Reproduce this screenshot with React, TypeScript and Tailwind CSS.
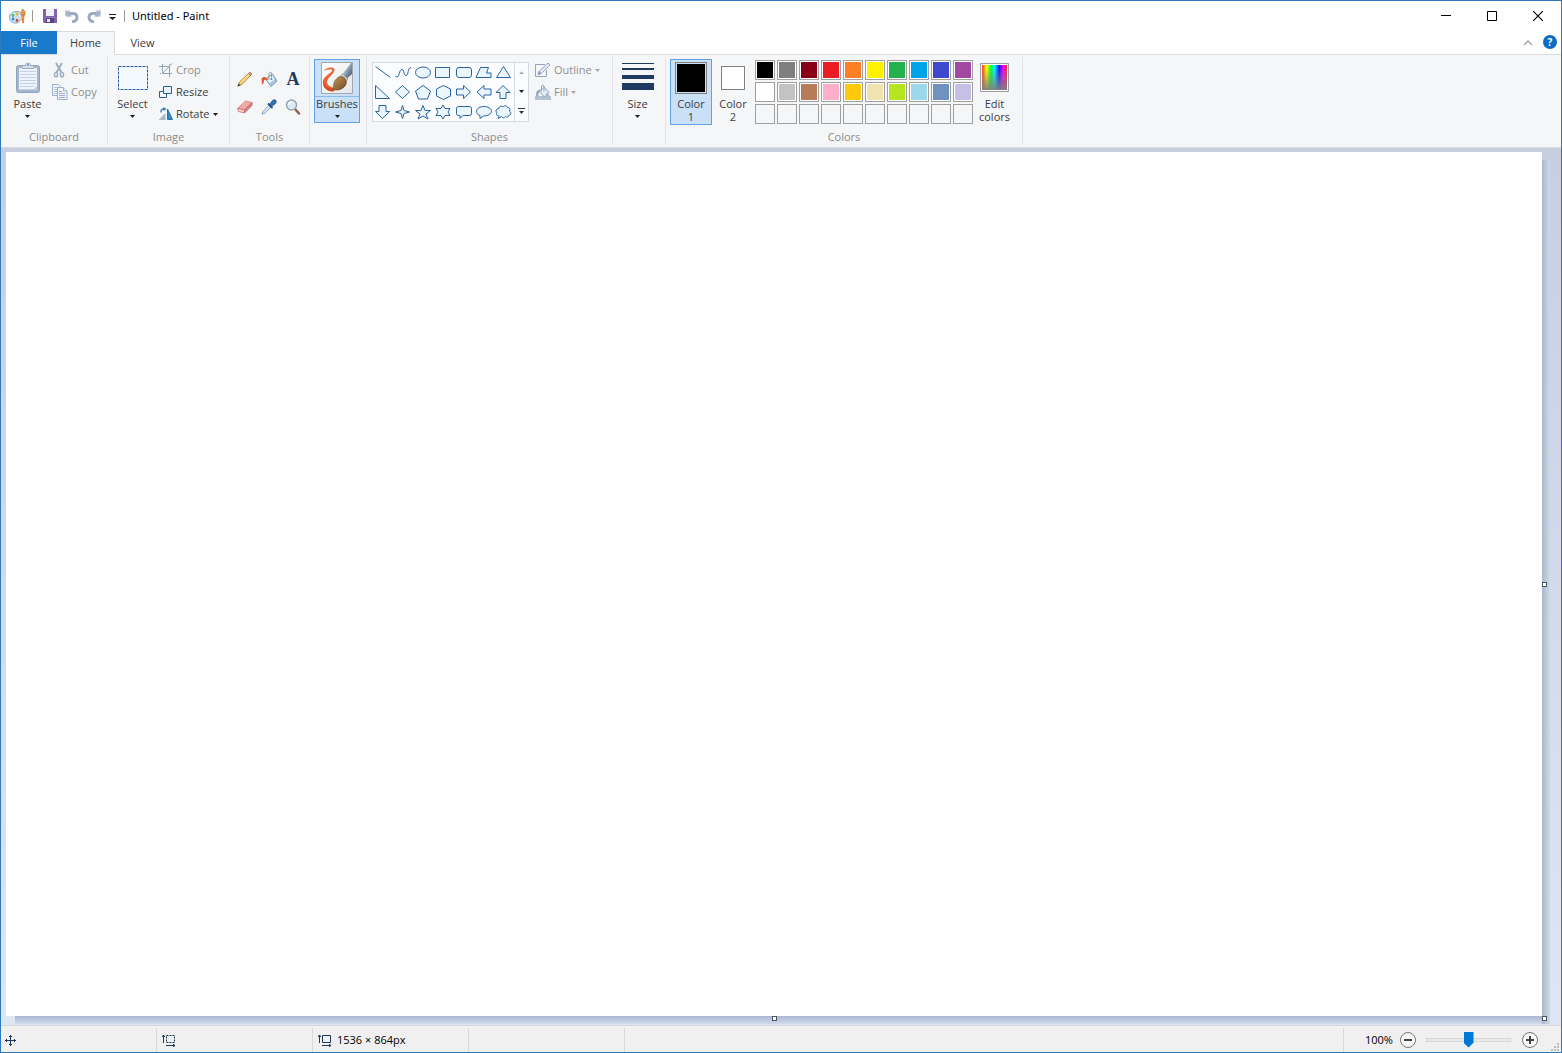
import { useState } from "react";
import type { ReactNode } from "react";
import clsx from "clsx";

const palette = [
  { name: "Black", className: "bg-[#000000]" },
  { name: "Gray-50%", className: "bg-[#7f7f7f]" },
  { name: "Dark red", className: "bg-[#880015]" },
  { name: "Red", className: "bg-[#ed1c24]" },
  { name: "Orange", className: "bg-[#ff7f27]" },
  { name: "Yellow", className: "bg-[#fff200]" },
  { name: "Green", className: "bg-[#22b14c]" },
  { name: "Turquoise", className: "bg-[#00a2e8]" },
  { name: "Indigo", className: "bg-[#3f48cc]" },
  { name: "Purple", className: "bg-[#a349a4]" },
  { name: "White", className: "bg-[#ffffff]" },
  { name: "Gray-25%", className: "bg-[#c3c3c3]" },
  { name: "Brown", className: "bg-[#b97a57]" },
  { name: "Rose", className: "bg-[#ffaec9]" },
  { name: "Gold", className: "bg-[#ffc90e]" },
  { name: "Light yellow", className: "bg-[#efe4b0]" },
  { name: "Lime", className: "bg-[#b5e61d]" },
  { name: "Light turquoise", className: "bg-[#99d9ea]" },
  { name: "Blue-gray", className: "bg-[#7092be]" },
  { name: "Lavender", className: "bg-[#c8bfe7]" },
];

// every outline is drawn on a 20x20 cell
const shapes = [
  { name: "Line", d: "M2.5 3.5 17.5 14.5" },
  { name: "Curve", d: "M2.5 13.5C7 16 6 5.5 9 6.5S10 12.5 13 12.5 14 5 18 4.5" },
  { name: "Oval", d: "M2.5 9.5a7.5 5.5 0 1 0 15 0a7.5 5.5 0 1 0-15 0Z" },
  { name: "Rectangle", d: "M2.5 4.5h14v10h-14Z" },
  { name: "Rounded rectangle", d: "M5 4.5h10a2.5 2.5 0 0 1 2.5 2.5v5a2.5 2.5 0 0 1-2.5 2.5H5a2.5 2.5 0 0 1-2.5-2.5V7A2.5 2.5 0 0 1 5 4.5Z" },
  { name: "Polygon", d: "M6.5 4.5h8l-2 5.5h4.5v4.5h-15Z" },
  { name: "Triangle", d: "M9.5 3.5 16.5 14.5h-14Z" },
  { name: "Right triangle", d: "M2.5 2.5v13h14Z" },
  { name: "Diamond", d: "M9.5 2.5 16.5 9l-7 6.5L2.5 9Z" },
  { name: "Pentagon", d: "M10 2.5 17.5 8l-3 8h-9l-3-8Z" },
  { name: "Hexagon", d: "M10.500 2.5l7 3.5v7l-7 3.5-7-3.5V6Z" },
  { name: "Right arrow", d: "M2.5 6h7V2.5L16.500 9l-7 6.5V12h-7Z" },
  { name: "Left arrow", d: "M17 6h-7V2.5L3 9l7 6.5V12h7Z" },
  { name: "Up arrow", d: "M6 15.5v-6H2l7-7 7 7H12v6Z" },
  { name: "Down arrow", d: "M6 2.5v6H2.5l7 7 7-7H13v-6Z" },
  { name: "Four-point star", d: "M9.5 2.5l1.5 5 5.5 1.5-5.5 1.5-1.5 5-1.5-5L2.5 9 8 7.5Z" },
  { name: "Five-point star", d: "M10 2.5l2 5h5.5l-4.500 3.5 2 5-5-3-5 3 2-5-4.500-3.5H8Z" },
  { name: "Six-point star", d: "M10 2l2 3.5h5L15 9l2 3.5h-5L10 16l-2-3.5H3L5 9 3 5.5h5Z" },
  { name: "Rounded callout", d: "M4.5 3.5h11a2 2 0 0 1 2 2v5a2 2 0 0 1-2 2H9l-3 3v-3H4.5a2 2 0 0 1-2-2v-5a2 2 0 0 1 2-2Z" },
  { name: "Oval callout", d: "M6 12.5C3.5 11.8 2.5 10.2 2.5 8.2 2.5 5.5 6 3.5 10 3.5s7.5 2 7.5 4.7-3.5 4.8-8 4.8l-3.5 2.5Z" },
  { name: "Cloud callout", d: "M5 5.5C5 3 7.500 2.5 9 4 10.500 2 13 2.500 13.500 4.500c2.500 0 3 2 2 3.500 2 1 1.500 4-.5 4 0 2-2.500 2.500-3.500 1.500C10.500 15.500 8 15 7.500 13.500l-3 2 .5-2.500C2.500 13 2 11 3 9.500 1 8.500 2 5.500 5 5.500Z" },
];

const line = { fill: "none", stroke: "#2a649f", strokeWidth: 1 };

function Caret({ faded = false }: { faded?: boolean }) {
  return (
    <svg width="5" height="3" viewBox="0 0 5 3" className={clsx("shrink-0", faded ? "text-[#a8a8a8]" : "text-[#1e1e1e]")}>
      <path d="M0 0h5L2.5 3Z" fill="currentColor" />
    </svg>
  );
}

function Group({ label, className, children }: { label?: string; className: string; children: ReactNode }) {
  return (
    <section aria-label={label} className={clsx("flex shrink-0 flex-col border-r border-[#e0e3e7] pt-0.5", className)}>
      <div className="flex h-[66px] shrink-0">{children}</div>
      {label ? <p className="mt-1 shrink-0 text-center leading-4 text-[#8c8c8c]">{label}</p> : null}
    </section>
  );
}

function BigButton({ icon, label, caret = true, className }: { icon: ReactNode; label: string; caret?: boolean; className: string }) {
  return (
    <button type="button" className={clsx("flex flex-col items-center leading-[13px]", className)}>
      <span className="flex h-[38px] items-center justify-center">{icon}</span>
      <span>{label}</span>
      {caret ? <span className="flex h-3 items-center"><Caret /></span> : null}
    </button>
  );
}

function SmallButton({ icon, label, disabled = false, caret = false }: { icon: ReactNode; label: string; disabled?: boolean; caret?: boolean }) {
  return (
    <button type="button" disabled={disabled} className={clsx("flex h-[22px] items-center gap-[3px]", disabled && "text-[#8f8f8f]")}>
      {icon}
      <span>{label}</span>
      {caret ? <Caret faded={disabled} /> : null}
    </button>
  );
}

function PaintLogo() {
  return (
    <svg width="17" height="17" viewBox="0 0 17 17">
      <path d="M.5 9.5C.5 6 3.5 3.500 7.5 3.5S14 6 14 9s-2 2.5-3 3 0 3-4 3-6.5-2-6.5-5.5Z" fill="#cfe6f2" stroke="#7ba3bd" />
      <circle cx="4" cy="7.5" r="1.4" fill="#5bb54d" />
      <circle cx="8" cy="6" r="1.4" fill="#f0b429" />
      <circle cx="4" cy="11" r="1.4" fill="#3c7fd0" />
      <circle cx="8" cy="12.5" r="1.4" fill="#d34a3c" />
      <circle cx="8.5" cy="9.3" r="1.3" fill="#fff" stroke="#7ba3bd" strokeWidth=".5" />
      <path d="M12.5 7h3l-.5 8h-2Z" fill="#e88a3a" />
      <path d="M12 7c0-2 .5-4 1.5-6 2 1 3 3 2.5 6Z" fill="#e49b4c" stroke="#b46a2a" strokeWidth=".6" />
    </svg>
  );
}

function SaveIcon() {
  return (
    <svg width="14" height="14" viewBox="0 0 14 14">
      <path d="M0 0h14v14H1l-1-1Z" fill="#7f62aa" />
      <path d="M3 0h8v7H3Z" fill="#f1eef7" />
      <path d="M1.5 8h11v1h-11Z" fill="#9479bb" />
      <path d="M3 9h8v5H3Z" fill="#57457d" />
      <path d="M4 10h3v3H4Z" fill="#e8e2f2" />
    </svg>
  );
}

function UndoIcon({ flip = false }: { flip?: boolean }) {
  return (
    <svg width="14" height="14" viewBox="0 0 14 14" className={clsx(flip && "-scale-x-100")}>
      <path d="M4 4.5h3.5c3 0 4.5 1.7 4.5 3.8 0 2.5-2 4.2-5 4.7" fill="none" stroke="#9aaac1" strokeWidth="3" />
      <path d="M.5 0v7.5H7Z" fill="#a8b6ca" />
      <path d="M0 4.5 4.5.5v8Z" fill="#a8b6ca" />
    </svg>
  );
}

function PasteIcon() {
  return (
    <svg width="26" height="32" viewBox="0 0 26 32">
      <rect x="1.5" y="3.5" width="23" height="27" rx="2" fill="#a4b5cd" stroke="#8fa2be" />
      <path d="M4 6h18v22H4Z" fill="#eef3fb" />
      <path d="M4 28v-1h15l3-3v4Z" fill="#c3cfe1" />
      <path d="M5 9.5h16M5 12.5h16M5 15.5h16M5 18.5h16M5 21.5h16M5 24.5h14" stroke="#c2d1e8" />
      <path d="M7 3.5h3.5a2.5 2.5 0 0 1 5 0H19V6.5H7Z" fill="#d5deea" stroke="#9aabc3" />
      <circle cx="13" cy="3" r="1" fill="#8396b2" />
    </svg>
  );
}

function CutIcon() {
  return (
    <svg width="16" height="16" viewBox="0 0 16 16" fill="none" stroke="#9dabc1">
      <path d="M4 1 9.5 10.5M10 1 4.5 10.5" strokeWidth="1.9" />
      <ellipse cx="4" cy="12.7" rx="1.6" ry="2.1" strokeWidth="1.4" />
      <ellipse cx="10" cy="12.7" rx="1.6" ry="2.1" strokeWidth="1.4" />
    </svg>
  );
}

function CopyIcon() {
  return (
    <svg width="16" height="16" viewBox="0 0 16 16" fill="#f0f4fa" stroke="#9eafc9">
      <path d="M.5.5h6l2 2v9h-8Z" />
      <path d="M2 3.5h4M2 5.5h4M2 7.5h4M2 9.5h3" stroke="#b8c6da" />
      <path d="M5.5 3.5h6l3.5 3.5v8.5H5.5Z" />
      <path d="M11.5 3.5v3.5h3.500M7 7.5h3M7 9.5h6M7 11.5h6M7 13.5h6" stroke="#9dafca" />
    </svg>
  );
}

function CropIcon() {
  return (
    <svg width="14" height="14" viewBox="0 0 14 14" fill="none" stroke="#95a3b7">
      <path d="M3.5 1v9.5H13M0 3.5h10.5V14" />
      <path d="M4 10 13 .5" />
      <path d="M1 10.5h2M10.5 1v2" strokeDasharray="1 1" />
    </svg>
  );
}

function ResizeIcon() {
  return (
    <svg width="14" height="14" viewBox="0 0 14 14" fill="none" stroke="#1f5f9f">
      <path d="M.5 6.5h7v6h-7Z" fill="#fff" />
      <path d="M4.5 1.5h8v7h-8Z" fill="#e9f3fc" />
    </svg>
  );
}

function RotateIcon() {
  return (
    <svg width="14" height="14" viewBox="0 0 14 14">
      <path d="M6.5 6v7H-.5Z" fill="#a9b8c6" />
      <path d="M8.5 2v10.5H13.5Z" fill="#2c8ac4" stroke="#2475ad" />
      <path d="M2 5.5Q1.5 2 5 2" fill="none" stroke="#2f79c0" strokeWidth="1.3" />
      <path d="M4.5 0l3 2-3 2Z" fill="#2f79c0" />
    </svg>
  );
}

function PencilIcon() {
  return (
    <svg width="16" height="16" viewBox="0 0 16 16">
      <path d="M1 15l1.5-4L11.5 2.5 13.5 4.5 5 13.5Z" fill="#f4cf65" stroke="#a57b35" strokeWidth=".8" />
      <path d="M3.5 11.5 12 3.5" stroke="#fff0b5" strokeWidth=".8" />
      <path d="M11.5 2.5l1.5-1.5 2 2-1.5 1.5Z" fill="#e09a87" stroke="#97594b" strokeWidth=".6" />
      <path d="M.5 15.5l1-3 2 2Z" fill="#403930" />
    </svg>
  );
}

function BucketIcon() {
  return (
    <svg width="17" height="17" viewBox="0 0 17 17">
      <path d="M4.5 8 11.5 3 16 10 10 15.5Z" fill="#a5c9e5" stroke="#7890a5" strokeWidth=".9" />
      <path d="M5.5 8 11 4l2.5 4.5-5 3.5Z" fill="#eef6fb" />
      <path d="M7 8C3.5 5 1 5.5.5 8.5L1 13.5Q2.5 13.5 3 9.5 4 8 7 9Z" fill="#dc5832" />
      <path d="M8 9V2.5Q9 0 10.5 2v4.5" fill="none" stroke="#8395a4" strokeWidth=".9" />
      <circle cx="10.5" cy="8" r="1" fill="#647f96" />
    </svg>
  );
}

function EraserIcon() {
  return (
    <svg width="16" height="14" viewBox="0 0 16 14">
      <path d="M.5 8.5 8.5 1l6.500 1.5L7.5 10Z" fill="#f3a9a6" stroke="#c9817e" strokeWidth=".8" />
      <path d="M.5 8.5l7 1.5V13L1.5 11.5Z" fill="#f8cfcb" stroke="#c9716e" strokeWidth=".8" />
      <path d="M7.5 10 15 2.5v3L7.5 13Z" fill="#df7f7c" stroke="#b96663" strokeWidth=".8" />
    </svg>
  );
}

function PickerIcon() {
  return (
    <svg width="16" height="16" viewBox="0 0 16 16">
      <path d="M1 15l1-2.5 6-6 1.8 1.8-6 6Z" fill="#d6e9f5" stroke="#7c98ae" strokeWidth=".9" />
      <path d="M7 4.5l4.5 4.5" stroke="#244b7d" strokeWidth="1.8" />
      <path d="M8.5 5.5l3-4q2-1.5 3.2-.3t-.2 3.3l-4 3Z" fill="#2f74bd" stroke="#1e457c" strokeWidth=".8" />
    </svg>
  );
}

function MagnifierIcon() {
  return (
    <svg width="16" height="16" viewBox="0 0 16 16">
      <path d="M10 10 14 14.5" stroke="#8a6246" strokeWidth="2.5" strokeLinecap="round" />
      <circle cx="6.5" cy="6" r="5" fill="#dcebf8" stroke="#98a3ae" strokeWidth="1.5" />
      <path d="M3.5 6Q4 3 7 3" fill="none" stroke="#fff" strokeWidth="1.3" />
    </svg>
  );
}

function BrushIcon() {
  return (
    <svg width="32" height="32" viewBox="0 0 32 32">
      <defs>
        <linearGradient id="brush-paper" x2="1" y2="1">
          <stop stopColor="#fff" />
          <stop offset="1" stopColor="#e4e7ea" />
        </linearGradient>
        <linearGradient id="brush-handle" x2="1" y2="1">
          <stop offset=".2" stopColor="#e6edf3" />
          <stop offset=".55" stopColor="#8294a7" />
          <stop offset="1" stopColor="#33465d" />
        </linearGradient>
        <linearGradient id="brush-hair" x2="1" y2="1">
          <stop stopColor="#c89a5c" />
          <stop offset="1" stopColor="#6f4622" />
        </linearGradient>
      </defs>
      <path d="M.5.5h31v31H.5Z" fill="url(#brush-paper)" stroke="#a0a9b2" />
      <path d="M2.5 9C5 6 11 4 13.5 7 14.5 11 7 14.5 6 19.5 6 24 11 26 16 26L12 29.5C5 29.5 1 24 2 18.500 3.500 13.500 11 11 11.500 8 10 6.500 6 7.500 2.500 9Z" fill="#ed6233" />
      <path d="M2 19c1 5 5 8 12 7.5L12 29.5C6 29.5 1.5 25 2 19Z" fill="#d64820" />
      <path d="M21 12.5 30 1h1v11l-6 5.5Z" fill="url(#brush-handle)" />
      <path d="M18.5 15l3-3.5 5.5 5.5-3 3.5Z" fill="#cbd2d8" stroke="#7b858d" strokeWidth=".6" />
      <path d="M11.5 27.5c2-1.5 0-5.5 3-9.5s7-4.5 9.5-1.5 1.500 7-2 9.5-7.5 2.500-10.5 1.5Z" fill="url(#brush-hair)" stroke="#6b4726" strokeWidth=".6" />
    </svg>
  );
}

function OutlineIcon() {
  return (
    <svg width="16" height="16" viewBox="0 0 16 16" fill="none" stroke="#95a4b9">
      <path d="M10 2.5H.5v12h11V8" />
      <path d="M3 12.5l1.5-3.5 8.5-8 2 2-8.5 8Z" fill="#e6ebf3" />
      <path d="M3 12.5l1-3 2 2Z" fill="#8494ab" />
    </svg>
  );
}

function FillIcon() {
  return (
    <svg width="16" height="16" viewBox="0 0 16 16">
      <path d="M0 12h16v4H0Z" fill="#b4c1d5" />
      <path d="M4.5 7 9 3l5 5.5-4.5 4.5Z" fill="#e5ecf5" stroke="#91a3bd" />
      <path d="M6.5 7V2q1.200-2 2.5 0V7.5" fill="none" stroke="#91a3bd" />
      <path d="M5 5.5C1.5 6 1 8 1 12.5H3.5Q3 9 5 8Z" fill="#98abc7" />
      <path d="M12 8l3 4.5h-5Z" fill="#a5b6ce" />
    </svg>
  );
}

function SpectrumIcon() {
  return (
    <svg width="29" height="29" viewBox="0 0 29 29">
      <defs>
        <linearGradient id="spectrum-hue">
          <stop stopColor="#f33" />
          <stop offset=".18" stopColor="#ff0" />
          <stop offset=".36" stopColor="#0f3" />
          <stop offset=".5" stopColor="#0ff" />
          <stop offset=".68" stopColor="#11f" />
          <stop offset=".85" stopColor="#f0f" />
          <stop offset="1" stopColor="#f22" />
        </linearGradient>
        <linearGradient id="spectrum-gray" x2="0" y2="1">
          <stop offset=".1" stopColor="#808080" stopOpacity="0" />
          <stop offset="1" stopColor="#808080" stopOpacity=".95" />
        </linearGradient>
      </defs>
      <path d="M.5.5h28v28H.5Z" fill="#fff" stroke="#9c9c9c" />
      <path d="M2 2h25v25H2Z" fill="url(#spectrum-hue)" />
      <path d="M2 2h25v25H2Z" fill="url(#spectrum-gray)" />
    </svg>
  );
}

function TitleBar() {
  return (
    <header className="flex h-[30px] shrink-0 items-center bg-white pl-2">
      <PaintLogo />
      <span className="mx-[6px] h-3 w-px bg-[#9a9a9a]" />
      <div className="flex items-center gap-2 pl-1">
        <button type="button" aria-label="Save"><SaveIcon /></button>
        <button type="button" aria-label="Undo"><UndoIcon /></button>
        <button type="button" aria-label="Redo"><UndoIcon flip /></button>
        <button type="button" aria-label="Customize Quick Access Toolbar">
          <svg width="7" height="7" viewBox="0 0 7 7"><path d="M0 1.5h7" stroke="#222" /><path d="M0 4h7L3.5 7Z" fill="#222" /></svg>
        </button>
      </div>
      <span className="mr-[7px] ml-2 h-3 w-px bg-[#9a9a9a]" />
      <h1 className="font-['Noto_Sans',sans-serif] text-black">Untitled - Paint</h1>
      <div className="ml-auto flex h-full">
        <button type="button" aria-label="Minimize" className="flex w-[46px] items-center justify-center">
          <svg width="10" height="10" viewBox="0 0 10 10"><path d="M0 4.5h10" stroke="#000" /></svg>
        </button>
        <button type="button" aria-label="Maximize" className="flex w-[46px] items-center justify-center">
          <svg width="10" height="10" viewBox="0 0 10 10"><path d="M.5.5h9v9h-9Z" fill="none" stroke="#000" /></svg>
        </button>
        <button type="button" aria-label="Close" className="flex w-[46px] items-center justify-center">
          <svg width="10" height="10" viewBox="0 0 10 10"><path d="M0 0l10 10M10 0 0 10" stroke="#000" strokeWidth="1.2" /></svg>
        </button>
      </div>
    </header>
  );
}

function Tabs() {
  return (
    <nav className="flex h-6 shrink-0 bg-white">
      <button type="button" className="w-14 border-b border-[#dadbdc] bg-[#1979ca] pt-px text-white">File</button>
      <button type="button" className="w-[58px] border-t border-r border-[#dadbdc] bg-[#f5f6f7]">Home</button>
      <div className="flex flex-1 items-center border-b border-[#dadbdc]">
        <button type="button" className="w-[55px] pt-px">View</button>
        <button type="button" aria-label="Minimize the Ribbon" className="ml-auto">
          <svg width="10" height="6" viewBox="0 0 10 6"><path d="M1 5l4-4 4 4" fill="none" stroke="#a0a0a0" strokeWidth="1.3" /></svg>
        </button>
        <button type="button" aria-label="Help" className="mr-1 mb-px ml-[10px] size-[14px] rounded-full bg-[#0b6cc4] text-[10px] leading-[14px] font-bold text-white">?</button>
      </div>
    </nav>
  );
}

function Swatch({ label, number, selected, onClick }: { label: string; number: number; selected: boolean; onClick: () => void }) {
  return (
    <button
      type="button"
      aria-pressed={selected}
      onClick={onClick}
      className={clsx("flex h-[66px] w-[42px] flex-col items-center border leading-[13px]", selected ? "border-[#62a2e4] bg-[#c9e0f7]" : "border-transparent")}
    >
      <span className="flex h-[37px] items-center pb-px">
        {number === 1 ? (
          <span className="size-8 border border-[#808080] bg-black ring-1 ring-[#c9e0f7] ring-inset" />
        ) : (
          <span className="size-6 border border-[#808080] bg-white" />
        )}
      </span>
      <span>{label}</span>
      <span>{number}</span>
    </button>
  );
}

function Ribbon() {
  const [slot, setSlot] = useState(1);

  return (
    <div className="flex h-[92px] shrink-0 bg-[#f5f6f7] py-0.5">
      <Group label="Clipboard" className="w-[107px]">
        <BigButton icon={<PasteIcon />} label="Paste" className="ml-1 w-[45px]" />
        <div className="ml-0.5">
          <SmallButton icon={<CutIcon />} label="Cut" disabled />
          <SmallButton icon={<CopyIcon />} label="Copy" disabled />
        </div>
      </Group>

      <Group label="Image" className="w-[122px]">
        <BigButton
          icon={<svg width="30" height="24" viewBox="0 0 30 24"><path d="M.5.5h29v23H.5Z" fill="#f4f9fd" stroke="#2461a3" strokeDasharray="3 1" /></svg>}
          label="Select"
          className="ml-0.5 w-[45px]"
        />
        <div className="ml-1">
          <SmallButton icon={<CropIcon />} label="Crop" disabled />
          <SmallButton icon={<ResizeIcon />} label="Resize" />
          <SmallButton icon={<RotateIcon />} label="Rotate" caret />
        </div>
      </Group>

      <Group label="Tools" className="w-20">
        <div className="ml-[3px] grid grid-cols-[24px_24px_24px] content-start pt-[6px]">
          <button type="button" aria-label="Pencil" className="flex h-7 items-center justify-center"><PencilIcon /></button>
          <button type="button" aria-label="Fill with color" className="flex h-7 items-center justify-center"><BucketIcon /></button>
          <button type="button" aria-label="Text" className="h-7 font-['Liberation_Serif',serif] text-lg leading-7 font-bold text-[#1f3b5c]">A</button>
          <button type="button" aria-label="Eraser" className="flex h-7 items-center justify-center"><EraserIcon /></button>
          <button type="button" aria-label="Color picker" className="flex h-7 items-center justify-center"><PickerIcon /></button>
          <button type="button" aria-label="Magnifier" className="flex h-7 items-center justify-center"><MagnifierIcon /></button>
        </div>
      </Group>

      <Group className="w-[57px]">
        <button type="button" className="ml-1 flex h-16 w-[46px] flex-col items-center border border-[#62a2e4] bg-[#c9e0f7] leading-[13px]">
          <span className="flex h-[37px] w-full items-center justify-center border-b border-[#8dbbe9]"><BrushIcon /></span>
          <span>Brushes</span>
          <span className="flex h-3 items-center"><Caret /></span>
        </button>
      </Group>

      <Group label="Shapes" className="w-[246px]">
        <div className="mt-[3px] ml-[5px] flex h-[60px] w-[157px] border border-[#d5dae0] bg-[#fbfcfd]">
          <div className="grid w-[141px] grid-cols-7">
            {shapes.map((shape) => (
              <button key={shape.name} type="button" aria-label={shape.name}>
                <svg width="20" height="20" viewBox="0 0 20 20">
                  <path d={shape.d} {...line} fill={shape.d.endsWith("Z") ? "#ebf5fc" : "none"} />
                </svg>
              </button>
            ))}
          </div>
          <div className="flex flex-1 flex-col border-l border-[#d5dae0]">
            <button type="button" aria-label="Scroll up" className="flex flex-1 rotate-180 items-center justify-center"><Caret faded /></button>
            <button type="button" aria-label="Scroll down" className="flex flex-1 items-center justify-center"><Caret /></button>
            <button type="button" aria-label="More shapes" className="flex flex-1 items-center justify-center">
              <svg width="7" height="6" viewBox="0 0 7 6"><path d="M0 .5h7" stroke="#333" /><path d="M1 3h5L3.5 6Z" fill="#333" /></svg>
            </button>
          </div>
        </div>
        <div className="ml-[6px]">
          <SmallButton icon={<OutlineIcon />} label="Outline" disabled caret />
          <SmallButton icon={<FillIcon />} label="Fill" disabled caret />
        </div>
      </Group>

      <Group className="w-[53px]">
        <BigButton
          icon={<svg width="32" height="30" viewBox="0 0 32 30"><path d="M0 0h32v1H0ZM0 5h32v2H0ZM0 12h32v4H0ZM0 20h32v7H0Z" fill="#1f3a60" /></svg>}
          label="Size"
          className="ml-0.5 w-[45px]"
        />
      </Group>

      <Group label="Colors" className="w-[357px]">
        <div className="ml-1 flex">
          <Swatch label="Color" number={1} selected={slot === 1} onClick={() => setSlot(1)} />
          <Swatch label="Color" number={2} selected={slot === 2} onClick={() => setSlot(2)} />
        </div>
        <div className="ml-px grid grid-cols-10 content-start gap-0.5 pt-px">
          {palette.map((color) => (
            <button key={color.name} type="button" aria-label={color.name} className="size-5 border border-[#a0a0a0] bg-white p-px">
              <span className={clsx("block size-full", color.className)} />
            </button>
          ))}
          {Array.from({ length: 10 }, (_, i) => (
            <button key={i} type="button" aria-label={`Custom color ${i + 1}`} className="size-5 border border-[#a0a0a0] bg-[#f5f6f7]" />
          ))}
        </div>
        <button type="button" className="flex w-[43px] flex-col items-center leading-[13px]">
          <span className="flex h-[38px] items-center pb-px"><SpectrumIcon /></span>
          <span>Edit</span>
          <span>colors</span>
        </button>
      </Group>
    </div>
  );
}

function Handle({ className }: { className: string }) {
  return <span className={clsx("absolute size-[5px] border border-[#4a5560] bg-white", className)} />;
}

function Workspace() {
  return (
    <main className="flex min-h-0 flex-1 border-t border-[#dadbdc] bg-linear-to-b from-[#c6cfe0] to-[#dce6f4] pt-1 pr-[19px] pb-[9px] pl-[5px]">
      <div className="relative flex-1 bg-white">
        <div className="absolute top-2 -right-2 -bottom-2 w-2 bg-linear-to-r from-[#a9b7ce] to-[#cfd9e9]" />
        <div className="absolute right-0 -bottom-2 left-[9px] h-2 bg-linear-to-b from-[#a9b8d0] to-[#d0dbeb]" />
        <Handle className="top-1/2 -right-[5px] -mt-0.5" />
        <Handle className="-bottom-[5px] left-1/2 -ml-0.5" />
        <Handle className="-right-[5px] -bottom-[5px]" />
      </div>
    </main>
  );
}

function StatusCell({ children }: { children?: ReactNode }) {
  return <div className="flex w-[156px] items-center gap-[5px] border-r border-[#d9d9d9] pl-[5px]">{children}</div>;
}

function SizeIcon({ dashed = false }: { dashed?: boolean }) {
  return (
    <svg width="14" height="13" viewBox="0 0 14 13" fill="none" stroke="#1e395b">
      <path d="M1.5 9V1M0 3l1.5-2L3 3M4 11.5h9M11 10l2 1.5-2 1.5" />
      <path d="M4.5 1.5h8v7h-8Z" strokeDasharray={dashed ? "2 1" : undefined} />
    </svg>
  );
}

function StatusBar() {
  const [zoom, setZoom] = useState(50);

  return (
    <footer className="flex h-[27px] shrink-0 border-t border-[#d7d7d7] bg-[#f0f0f0] pt-0.5 text-black">
      <div className="flex w-[156px] items-center border-r border-[#d9d9d9] pl-1">
        <svg width="11" height="11" viewBox="0 0 11 11" fill="none" stroke="#1e395b">
          <path d="M5.5 0v11M0 5.5h11M4 2l1.5-1.5L7 2M4 9l1.5 1.5L7 9M2 4 .5 5.5 2 7M9 4l1.5 1.5L9 7" />
        </svg>
      </div>
      <StatusCell><SizeIcon dashed /></StatusCell>
      <StatusCell>
        <SizeIcon />
        <span>1536 × 864px</span>
      </StatusCell>
      <StatusCell />
      <div className="ml-auto flex items-center border-l border-[#d9d9d9] pl-[21px]">
        <label htmlFor="zoom" className="w-[35px]">100%</label>
        <button type="button" aria-label="Zoom out">
          <svg width="16" height="16" viewBox="0 0 16 16"><circle cx="8" cy="8" r="7.5" fill="#f8f8f8" stroke="#777" /><path d="M4 8h8" stroke="#444" strokeWidth="2" /></svg>
        </button>
        <input
          id="zoom"
          type="range"
          value={zoom}
          onChange={(e) => setZoom(Number(e.target.value))}
          className="mr-[11px] mb-px ml-[10px] h-4 w-[85px] appearance-none bg-transparent [&::-webkit-slider-runnable-track]:h-1 [&::-webkit-slider-runnable-track]:border [&::-webkit-slider-runnable-track]:border-[#d6d6d6] [&::-webkit-slider-runnable-track]:bg-[#e7eaea] [&::-webkit-slider-thumb]:-mt-[7px] [&::-webkit-slider-thumb]:h-4 [&::-webkit-slider-thumb]:w-[10px] [&::-webkit-slider-thumb]:appearance-none [&::-webkit-slider-thumb]:bg-[#0078d7] [&::-webkit-slider-thumb]:[clip-path:polygon(0_0,100%_0,100%_70%,50%_100%,0_70%)]"
        />
        <button type="button" aria-label="Zoom in">
          <svg width="16" height="16" viewBox="0 0 16 16"><circle cx="8" cy="8" r="7.5" fill="#f8f8f8" stroke="#777" /><path d="M4 8h8M8 4v8" stroke="#444" strokeWidth="2" /></svg>
        </button>
        <svg width="8" height="8" viewBox="0 0 8 8" className="mr-0.5 mb-px ml-[13px] self-end">
          <path d="M6 0h2v2H6ZM3 3h2v2H3ZM6 3h2v2H6ZM0 6h2v2H0ZM3 6h2v2H3ZM6 6h2v2H6Z" fill="#bdbdbd" />
        </svg>
      </div>
    </footer>
  );
}

export default function App() {
  return (
    <div className="flex h-screen flex-col border border-[#2e7abf] bg-white font-['Open_Sans','Noto_Sans',sans-serif] text-[11px] text-[#3c3c3c]">
      <TitleBar />
      <Tabs />
      <Ribbon />
      <Workspace />
      <StatusBar />
    </div>
  );
}
